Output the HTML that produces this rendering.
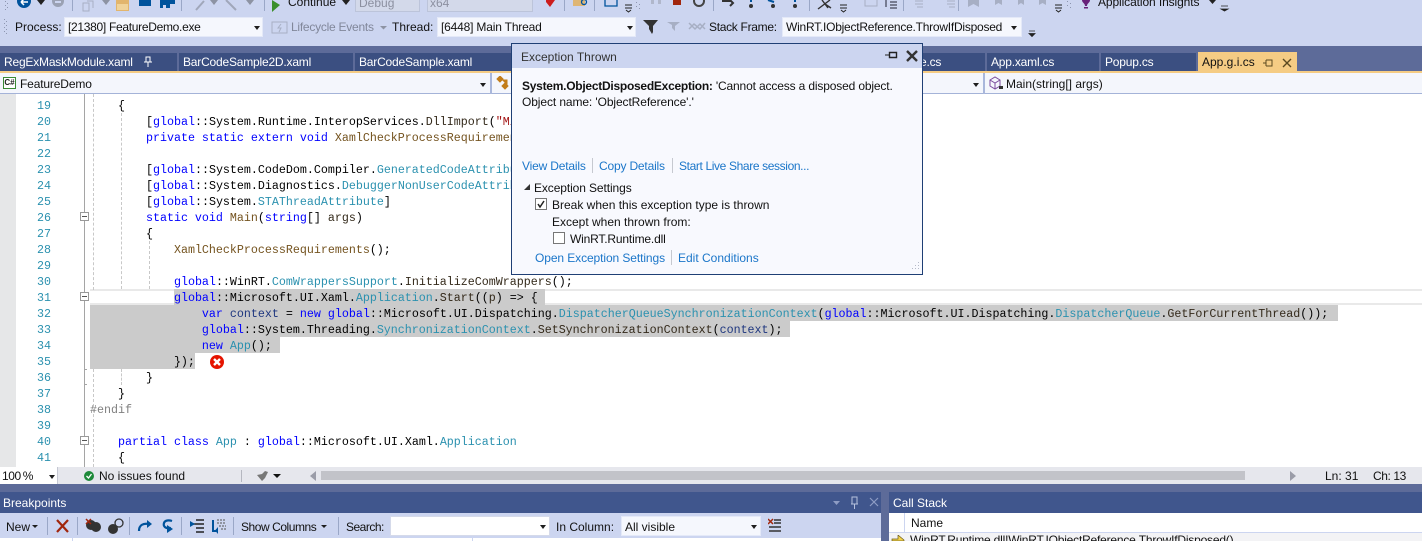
<!DOCTYPE html>
<html><head><meta charset="utf-8">
<style>
html,body{margin:0;padding:0;width:1422px;height:541px;overflow:hidden;background:#fff}
body{position:relative;font-family:"Liberation Sans",sans-serif;font-size:12px;color:#111}
.a{position:absolute}
.u{position:absolute;white-space:nowrap;line-height:16px;height:16px}
.c{position:absolute;left:90px;margin-top:1px;white-space:pre;font-family:"Liberation Mono",monospace;font-size:11.67px;line-height:16px;height:16px;color:#000}
.n{position:absolute;left:20px;width:31px;margin-top:1px;text-align:right;font-family:"Liberation Mono",monospace;font-size:11.67px;line-height:16px;color:#2b91af}
.k{color:#0000ff}.t{color:#2b91af}.m{color:#74531f}.d{color:#33291a}.v{color:#1f377f}.s{color:#a31515}.g{color:#808080}
.tab{position:absolute;top:53px;height:18px;background:#3b4f81;color:#fff;line-height:18px;padding-left:4px;box-sizing:border-box;white-space:nowrap;letter-spacing:-.2px}
.sep{position:absolute;width:1px;background:#9aa7c7}
.l{color:#1b76c9}
.cb{position:absolute;background:#f5f7fd;border:1px solid #e4e9f8;box-sizing:border-box;height:20px}
.ar{position:absolute;width:0;height:0;border-left:3.5px solid transparent;border-right:3.5px solid transparent;border-top:4px solid #1e1e1e}
.fold{position:absolute;left:80px;width:7px;height:7px;border:1px solid #999;background:#fff}
.fold:after{content:"";position:absolute;left:1px;top:3px;width:5px;height:1px;background:#555}
.dash{position:absolute;width:0;border-left:1px dashed #c8c8c8}
</style></head><body>

<!-- Top command area -->
<div class="a" style="left:0;top:0;width:1422px;height:46px;background:#ccd5f0"></div>
<svg class="a" style="left:0;top:0" width="1422" height="46">
 <g fill="#8d96b0"><rect x="5" y="1" width="1" height="1"/><rect x="7" y="3" width="1" height="1"/><rect x="5" y="5" width="1" height="1"/><rect x="7" y="7" width="1" height="1"/><rect x="5" y="9" width="1" height="1"/>
 <rect x="4" y="19" width="1" height="1"/><rect x="6" y="21" width="1" height="1"/><rect x="4" y="23" width="1" height="1"/><rect x="6" y="25" width="1" height="1"/><rect x="4" y="27" width="1" height="1"/><rect x="6" y="29" width="1" height="1"/><rect x="4" y="31" width="1" height="1"/><rect x="6" y="33" width="1" height="1"/>
 <rect x="636" y="2" width="1" height="1"/><rect x="639" y="4" width="1" height="1"/><rect x="636" y="6" width="1" height="1"/><rect x="639" y="8" width="1" height="1"/>
 <rect x="1067" y="1" width="1" height="1"/><rect x="1070" y="3" width="1" height="1"/><rect x="1067" y="5" width="1" height="1"/><rect x="1070" y="7" width="1" height="1"/></g>
 <circle cx="24" cy="1" r="7" fill="#00539c"/><path d="M21 2l3-3M21 2l3 3M21 2h7" stroke="#fff" stroke-width="1.500" fill="none"/>
 <path d="M37 0h8l-4 5z" fill="#222"/>
 <circle cx="58" cy="1" r="6" fill="#9aa1b3"/><path d="M55 2h6" stroke="#ccd5f0" stroke-width="2"/>
 <rect x="72" y="0" width="1" height="11" fill="#9aa7c7"/>
 <path d="M83 3h6v8h-6zM87 1h6v7" stroke="#a7afc4" fill="none"/><path d="M102 0h8l-4 5z" fill="#8d93a3"/>
 <path d="M116 0h13v11h-13z" fill="#e2b56d"/><path d="M117 4h11v6h-11z" fill="#f0d39a"/>
 <rect x="139" y="0" width="12" height="6" fill="#00539c"/>
 <rect x="160" y="0" width="10" height="8" fill="#00539c"/><rect x="170" y="0" width="5" height="4" fill="#00539c"/><rect x="163" y="5" width="3" height="3" fill="#ccd5f0"/>
 <rect x="181" y="0" width="1" height="11" fill="#9aa7c7"/>
 <path d="M196 10l8-9" stroke="#a0a7ba" stroke-width="2"/><path d="M210 0h8l-4 5z" fill="#8d93a3"/>
 <path d="M236 10l-10-10" stroke="#a0a7ba" stroke-width="2"/><path d="M246 0h8l-4 5z" fill="#8d93a3"/>
 <rect x="264" y="0" width="1" height="11" fill="#9aa7c7"/>
 <path d="M272 0l8 5-8 7z" fill="#3a8f2b"/>
 <path d="M342 0h8l-4 5z" fill="#222"/>
 <path d="M408 0h6l-3 4z" fill="#9a9fb0"/><path d="M526 0h6l-3 3z" fill="#9a9fb0"/>
 <path d="M546 2l4 5 5-7h-9z" fill="#cc1d1d"/>
 <rect x="564" y="0" width="1" height="11" fill="#9aa7c7"/>
 <path d="M573 0h12v6h-12z" fill="#dfb675"/><circle cx="584" cy="2" r="2.500" fill="none" stroke="#00539c" stroke-width="1.300"/>
 <rect x="594" y="0" width="1" height="11" fill="#9aa7c7"/>
 <path d="M605 0v6h12v-6" fill="none" stroke="#00539c" stroke-width="1.300"/>
 <path d="M625 5h7M625 8h7M626 10l2.500 2 2.500-2" stroke="#222" fill="none"/>
 <rect x="651" y="0" width="3" height="4" fill="#b0b7cb"/><rect x="658" y="0" width="3" height="4" fill="#b0b7cb"/>
 <rect x="673" y="0" width="8" height="5" fill="#a1260d"/>
 <circle cx="699" cy="1" r="5" fill="none" stroke="#444" stroke-width="2"/>
 <rect x="713" y="0" width="1" height="11" fill="#9aa7c7"/>
 <path d="M722 1h9l2 2-3 3" stroke="#333" stroke-width="2" fill="none"/>
 <rect x="750" y="0" width="2" height="2" fill="#00539c"/><circle cx="751" cy="6" r="2" fill="#333"/>
 <path d="M768 0l6 2" stroke="#00539c" stroke-width="2"/><circle cx="773" cy="6" r="2" fill="#333"/>
 <rect x="794" y="0" width="2" height="2" fill="#00539c"/><circle cx="795" cy="6" r="2" fill="#333"/>
 <rect x="809" y="0" width="1" height="11" fill="#9aa7c7"/>
 <path d="M818 9l12-9M822 0l6 8M825 4l6 4" stroke="#333" stroke-width="1.400" fill="none"/>
 <path d="M840 5h7M840 8h7M841 10l2.500 2 2.500-2" stroke="#222" fill="none"/>
 <path d="M865 0v6h12v-6" stroke="#a7afc4" fill="none"/>
 <path d="M886 0v7M890 2h7M890 5h7M890 8h7" stroke="#223" fill="none"/>
 <rect x="903" y="0" width="1" height="11" fill="#9aa7c7"/>
 <path d="M915 1h8M915 4h8M917 7h6M947 1h8M947 4h8M949 7h6" stroke="#a7afc4" fill="none"/>
 <rect x="958" y="0" width="1" height="11" fill="#9aa7c7"/>
 <path d="M968 0h11v7l-5.500-3-5.500 3zM995 0h7v5l-3.500-2-3.500 2zM1018 0h6v5l-3-2-3 2zM1039 0h7v5l-3.500-2-3.500 2z" fill="#a7afc4"/>
 <path d="M1055 5h7M1055 8h7M1056 10l2.500 2 2.500-2" stroke="#222" fill="none"/>
 <path d="M1082 0c0 3 3 3 3 6h2c0-3 3-3 3-6z" fill="#68217a"/><rect x="1084" y="7" width="4" height="1.500" fill="#68217a"/>
 <path d="M1209 0h7l-3.500 4z" fill="#222"/>
 <path d="M1221 6h7M1221 9h7l-3.500 2z" stroke="#222" fill="#222" stroke-width=".8"/>
 <path d="M1029 31h6M1029 33.500h6l-3 3z" stroke="#222" fill="#222" stroke-width=".8"/>
 <path d="M643 20h15l-5 6v6l-1 2-3-5v-3z" fill="#333"/>
 <path d="M667 22h13l-5 4v5l-3-3v-3z" fill="#a7afc4"/>
 <path d="M689 23l6 6 5-5 5 5M689 29l5-5 6 5 5-6" stroke="#a7afc4" stroke-width="1.500" fill="none"/>
 <path d="M272 22h15v11h-15z" fill="none" stroke="#a7afc4"/><path d="M281 24l-3 4h3l-2 4" stroke="#a7afc4" fill="none"/>
 <path d="M380 26h7l-3.500 3.500z" fill="#8d93a3"/>
</svg>
<div class="u" style="left:288px;top:-6px">Continue</div>
<div class="a" style="left:355px;top:-8px;width:65px;height:20px;background:#d3d9ea;border:1px solid #bcc4da;box-sizing:border-box"></div>
<div class="u" style="left:359px;top:-5px;color:#8c90a0">Debug</div>
<div class="a" style="left:427px;top:-8px;width:106px;height:20px;background:#d3d9ea;border:1px solid #bcc4da;box-sizing:border-box"></div>
<div class="u" style="left:430px;top:-5px;color:#8c90a0">x64</div>
<div class="u" style="left:1098px;top:-6px;letter-spacing:-.1px">Application Insights</div>

<div class="u" style="left:15px;top:19px">Process:</div>
<div class="cb" style="left:64px;top:17px;width:199px"></div>
<div class="u" style="left:68px;top:19px;letter-spacing:-.3px">[21380] FeatureDemo.exe</div>
<div class="ar" style="left:254px;top:26px"></div>
<div class="u" style="left:291px;top:19px;color:#81879a;letter-spacing:-.25px">Lifecycle Events</div>
<div class="u" style="left:392px;top:19px">Thread:</div>
<div class="cb" style="left:437px;top:17px;width:199px"></div>
<div class="u" style="left:441px;top:19px;letter-spacing:-.18px">[6448] Main Thread</div>
<div class="ar" style="left:627px;top:26px"></div>
<div class="u" style="left:709px;top:19px;letter-spacing:-.3px">Stack Frame:</div>
<div class="cb" style="left:782px;top:17px;width:240px"></div>
<div class="u" style="left:786px;top:19px;letter-spacing:-.24px">WinRT.IObjectReference.ThrowIfDisposed</div>
<div class="ar" style="left:1011px;top:26px"></div>

<!-- Tabs -->
<div class="a" style="left:0;top:46px;width:1422px;height:25px;background:#5d6b99"></div>
<div class="tab" style="left:0;width:177px">RegExMaskModule.xaml</div>
<svg class="a" style="left:143px;top:56px" width="10" height="12"><path d="M3 1h4v5H3zM1 6h8M5 6v5" stroke="#fff" fill="none"/></svg>
<div class="tab" style="left:179px;width:174px">BarCodeSample2D.xaml</div>
<div class="tab" style="left:355px;width:160px">BarCodeSample.xaml</div>
<div class="tab" style="left:517px;width:468px;padding-left:403px">e.cs</div>
<div class="tab" style="left:987px;width:112px">App.xaml.cs</div>
<div class="tab" style="left:1101px;width:95px">Popup.cs</div>
<div class="tab" style="left:1198px;top:52px;height:19px;width:99px;background:#f5cc84;color:#111;line-height:21px;letter-spacing:0">App.g.i.cs</div>
<svg class="a" style="left:1263px;top:57px" width="30" height="12"><path d="M0 6h3M3 3v6M3 3h6v6H3" stroke="#5b4a20" fill="none"/><path d="M20 2l8 8M28 2l-8 8" stroke="#5b4a20" stroke-width="1.400"/></svg>
<div class="a" style="left:0;top:71px;width:1422px;height:2px;background:#f5cc84"></div>

<!-- Navigation bar -->
<div class="a" style="left:0;top:73px;width:1422px;height:21px;background:#f4f6fc;border-bottom:1px solid #a4b3d8;box-sizing:border-box"></div>
<div class="a" style="left:3px;top:77px;width:11px;height:10px;border:1px solid #388a34;background:#fff;font-size:8px;line-height:10px;text-align:center;font-weight:bold;color:#222">C#</div>
<div class="u" style="left:20px;top:76px;letter-spacing:-.15px">FeatureDemo</div>
<div class="ar" style="left:480px;top:83px"></div>
<div class="a" style="left:490px;top:73px;width:2px;height:21px;background:#a9b7db"></div>
<svg class="a" style="left:496px;top:76px" width="15" height="15"><path d="M1 3l3-3 3 3-3 3zM6 4h5v5M9 7l3 3-3 3-3-3z" fill="#c27d1a" stroke="#c27d1a"/></svg>
<div class="ar" style="left:973px;top:83px"></div>
<div class="a" style="left:983px;top:73px;width:2px;height:21px;background:#a9b7db"></div>
<svg class="a" style="left:989px;top:76px" width="15" height="15"><path d="M1 4l5-3 5 3v6l-5 3-5-3zM1 4l5 3 5-3M6 7v6" stroke="#7b4c9e" fill="none"/><rect x="10" y="10" width="4" height="3" fill="#333"/></svg>
<div class="u" style="left:1006px;top:76px">Main(string[] args)</div>

<!-- Editor -->
<div class="a" style="left:0;top:94px;width:16px;height:373px;background:#e6e7e8"></div>
<div class="a" style="left:84px;top:94px;width:1px;height:373px;background:#a5a5a5"></div>
<div class="a" style="left:90px;top:289px;width:1332px;height:16px;border-top:2px solid #e9e9e9;border-bottom:2px solid #e9e9e9;box-sizing:border-box"></div>
<div class="a" style="left:174px;top:289px;width:371px;height:16px;background:#cbcbcb"></div>
<div class="a" style="left:90px;top:305px;width:1248px;height:16px;background:#cbcbcb"></div>
<div class="a" style="left:90px;top:321px;width:700px;height:16px;background:#cbcbcb"></div>
<div class="a" style="left:90px;top:337px;width:190px;height:16px;background:#cbcbcb"></div>
<div class="a" style="left:90px;top:353px;width:105px;height:16px;background:#cbcbcb"></div>

<div class="dash" style="left:93px;top:94px;height:196px"></div><div class="dash" style="left:93px;top:369px;height:98px"></div>
<div class="dash" style="left:121px;top:113px;height:176px"></div><div class="dash" style="left:121px;top:369px;height:16px"></div>
<div class="dash" style="left:149px;top:241px;height:48px"></div>
<div class="a" style="left:84px;top:369px;width:3px;height:1px;background:#a5a5a5"></div>
<div class="a" style="left:84px;top:384px;width:3px;height:1px;background:#a5a5a5"></div>

<div class="fold" style="top:212px"></div>
<div class="fold" style="top:292px"></div>
<div class="fold" style="top:436px"></div>

<div class="n" style="top:97px">19</div><div class="n" style="top:113px">20</div><div class="n" style="top:129px">21</div><div class="n" style="top:145px">22</div><div class="n" style="top:161px">23</div><div class="n" style="top:177px">24</div><div class="n" style="top:193px">25</div><div class="n" style="top:209px">26</div><div class="n" style="top:225px">27</div><div class="n" style="top:241px">28</div><div class="n" style="top:257px">29</div><div class="n" style="top:273px">30</div><div class="n" style="top:289px">31</div><div class="n" style="top:305px">32</div><div class="n" style="top:321px">33</div><div class="n" style="top:337px">34</div><div class="n" style="top:353px">35</div><div class="n" style="top:369px">36</div><div class="n" style="top:385px">37</div><div class="n" style="top:401px">38</div><div class="n" style="top:417px">39</div><div class="n" style="top:433px">40</div><div class="n" style="top:449px">41</div>

<div class="c" style="top:97px">    {</div>
<div class="c" style="top:113px">        [<span class="k">global</span>::System.Runtime.InteropServices.<span class="d">DllImport</span>(<span class="s">"Microsoft.ui.xaml.dll"</span>)]</div>
<div class="c" style="top:129px">        <span class="k">private static extern void</span> <span class="m">XamlCheckProcessRequirements</span>();</div>
<div class="c" style="top:161px">        [<span class="k">global</span>::System.CodeDom.Compiler.<span class="t">GeneratedCodeAttribute</span>(<span class="s">"Microsoft.UI.Xaml"</span>)]</div>
<div class="c" style="top:177px">        [<span class="k">global</span>::System.Diagnostics.<span class="t">DebuggerNonUserCodeAttribute</span>()]</div>
<div class="c" style="top:193px">        [<span class="k">global</span>::System.<span class="t">STAThreadAttribute</span>]</div>
<div class="c" style="top:209px">        <span class="k">static void</span> <span class="m">Main</span>(<span class="k">string</span>[] <span class="d">args</span>)</div>
<div class="c" style="top:225px">        {</div>
<div class="c" style="top:241px">            <span class="m">XamlCheckProcessRequirements</span>();</div>
<div class="c" style="top:273px">            <span class="k">global</span>::WinRT.<span class="t">ComWrappersSupport</span>.<span class="d">InitializeComWrappers</span>();</div>
<div class="c" style="top:289px">            <span class="k">global</span>::Microsoft.UI.Xaml.<span class="t">Application</span>.<span class="d">Start</span>((<span class="d">p</span>) =&gt; {</div>
<div class="c" style="top:305px">                <span class="k">var</span> <span class="v">context</span> = <span class="k">new</span> <span class="k">global</span>::Microsoft.UI.Dispatching.<span class="t">DispatcherQueueSynchronizationContext</span>(<span class="k">global</span>::Microsoft.UI.Dispatching.<span class="t">DispatcherQueue</span>.<span class="d">GetForCurrentThread</span>());</div>
<div class="c" style="top:321px">                <span class="k">global</span>::System.Threading.<span class="t">SynchronizationContext</span>.<span class="d">SetSynchronizationContext</span>(<span class="v">context</span>);</div>
<div class="c" style="top:337px">                <span class="k">new</span> <span class="t">App</span>();</div>
<div class="c" style="top:353px">            });</div>
<div class="c" style="top:369px">        }</div>
<div class="c" style="top:385px">    }</div>
<div class="c g" style="top:401px">#endif</div>
<div class="c" style="top:433px">    <span class="k">partial class</span> <span class="t">App</span> : <span class="k">global</span>::Microsoft.UI.Xaml.<span class="t">Application</span></div>
<div class="c" style="top:449px">    {</div>

<svg class="a" style="left:209px;top:354px" width="16" height="16"><circle cx="8" cy="8" r="7" fill="#e51400"/><path d="M5 5l6 6M11 5l-6 6" stroke="#fff" stroke-width="2.400"/></svg>

<!-- Exception dialog -->
<div class="a" style="left:511px;top:43px;width:412px;height:232px;background:#f8f9fe;border:1px solid #1f3f75;box-sizing:border-box"></div>
<div class="a" style="left:512px;top:44px;width:410px;height:24px;background:#ccd5f0"></div>
<div class="u" style="left:521px;top:49px;color:#333">Exception Thrown</div>
<svg class="a" style="left:884px;top:49px" width="36" height="14"><path d="M1 6h4" stroke="#222"/><path d="M5.500 3.500h7v5h-7z" stroke="#222" stroke-width="1.400" fill="none"/><path d="M23 2l10 10M33 2L23 12" stroke="#333" stroke-width="2.400"/></svg>
<div class="u" style="left:522px;top:78px;letter-spacing:-.15px"><b style="letter-spacing:-.26px">System.ObjectDisposedException:</b> 'Cannot access a disposed object.</div>
<div class="u" style="left:522px;top:94px;letter-spacing:-.1px">Object name: 'ObjectReference'.'</div>
<div class="u l" style="left:522px;top:158px;letter-spacing:-.18px">View Details</div>
<div class="a" style="left:592px;top:158px;width:1px;height:15px;background:#c6c9d0"></div>
<div class="u l" style="left:599px;top:158px;letter-spacing:-.18px">Copy Details</div>
<div class="a" style="left:672px;top:158px;width:1px;height:15px;background:#c6c9d0"></div>
<div class="u l" style="left:679px;top:158px;letter-spacing:-.37px">Start Live Share session...</div>
<svg class="a" style="left:523px;top:183px" width="8" height="8"><path d="M7 1v6H1z" fill="#333"/></svg>
<div class="u" style="left:534px;top:180px;letter-spacing:-.1px">Exception Settings</div>
<div class="a" style="left:535px;top:198px;width:12px;height:12px;border:1px solid #777;background:#fff;box-sizing:border-box"></div>
<svg class="a" style="left:535px;top:198px" width="12" height="12"><path d="M3 6l2 3 4-6" stroke="#222" stroke-width="1.500" fill="none"/></svg>
<div class="u" style="left:552px;top:197px">Break when this exception type is thrown</div>
<div class="u" style="left:552px;top:214px">Except when thrown from:</div>
<div class="a" style="left:553px;top:232px;width:12px;height:12px;border:1px solid #777;background:#fff;box-sizing:border-box"></div>
<div class="u" style="left:570px;top:231px;letter-spacing:-.17px">WinRT.Runtime.dll</div>
<div class="u l" style="left:535px;top:250px;letter-spacing:-.09px">Open Exception Settings</div>
<div class="a" style="left:671px;top:250px;width:1px;height:15px;background:#c6c9d0"></div>
<div class="u l" style="left:678px;top:250px">Edit Conditions</div>
<svg class="a" style="left:909px;top:261px" width="12" height="12" fill="#b5bac8"><rect x="9" y="1" width="1" height="1"/><rect x="6" y="4" width="1" height="1"/><rect x="9" y="4" width="1" height="1"/><rect x="3" y="7" width="1" height="1"/><rect x="6" y="7" width="1" height="1"/><rect x="9" y="7" width="1" height="1"/></svg>

<!-- Status row -->
<div class="a" style="left:0;top:467px;width:1422px;height:17px;background:#e6e7ed"></div>
<div class="a" style="left:0;top:467px;width:58px;height:17px;background:#fff;border-right:1px solid #c5c8d3;box-sizing:border-box"></div>
<div class="u" style="left:2px;top:468px;letter-spacing:-.4px;word-spacing:-1px">100 %</div>
<div class="ar" style="left:49px;top:475px"></div>
<svg class="a" style="left:83px;top:470px" width="12" height="12"><circle cx="6" cy="6" r="5" fill="#1e8a3a"/><path d="M3.500 6l2 2 3-4" stroke="#fff" stroke-width="1.300" fill="none"/></svg>
<div class="u" style="left:99px;top:468px">No issues found</div>
<div class="a" style="left:241px;top:470px;width:1px;height:12px;background:#b5b7c0"></div>
<svg class="a" style="left:256px;top:470px" width="26" height="13"><path d="M1 5l5 6 3-3 3-6-3-1-3 3z" fill="#777"/><path d="M17 4h8l-4 4z" fill="#111"/></svg>
<svg class="a" style="left:309px;top:471px" width="8" height="10"><path d="M7 0v10L1 5z" fill="#9a9ca8"/></svg>
<div class="a" style="left:321px;top:471px;width:924px;height:9px;background:#c2c3c9"></div>
<svg class="a" style="left:1289px;top:471px" width="8" height="10"><path d="M1 0v10l6-5z" fill="#9a9ca8"/></svg>
<div class="u" style="left:1325px;top:468px">Ln: 31</div>
<div class="u" style="left:1373px;top:468px;letter-spacing:-.4px">Ch: 13</div>

<!-- Bottom panels -->
<div class="a" style="left:0;top:484px;width:1422px;height:57px;background:#5d6b99"></div>
<div class="a" style="left:0;top:492px;width:881px;height:21px;background:#40568d"></div>
<div class="u" style="left:3px;top:495px;color:#fff">Breakpoints</div>
<svg class="a" style="left:832px;top:496px" width="48" height="14"><path d="M1 5h7l-3.500 4z" fill="#8e9cc4"/><path d="M20 1h5v7h-5zM19 8h7M22.500 8v5" stroke="#b6c1dd" fill="none"/><path d="M38 2l8 8M46 2l-8 8" stroke="#8e9cc4" stroke-width="1.200"/></svg>
<div class="a" style="left:0;top:513px;width:881px;height:25px;background:#ccd5f0"></div>
<div class="a" style="left:0;top:538px;width:881px;height:3px;background:#fff"></div>
<div class="a" style="left:72px;top:538px;width:1px;height:3px;background:#ccd5f0"></div>
<div class="a" style="left:472px;top:538px;width:1px;height:3px;background:#ccd5f0"></div>
<div class="u" style="left:6px;top:519px">New</div>
<div class="ar" style="left:32px;top:525px;border-top-width:3px"></div>
<div class="sep" style="left:47px;top:517px;height:18px"></div>
<div class="sep" style="left:77px;top:517px;height:18px"></div>
<div class="sep" style="left:129px;top:517px;height:18px"></div>
<div class="sep" style="left:181px;top:517px;height:18px"></div>
<div class="sep" style="left:233px;top:517px;height:18px"></div>
<div class="sep" style="left:338px;top:517px;height:18px"></div>
<svg class="a" style="left:55px;top:517px" width="320" height="20">
 <path d="M2 3l11 12M13 3L2 15" stroke="#a1260d" stroke-width="2.200"/>
 <circle cx="36" cy="8" r="5" fill="#333"/><circle cx="41" cy="10" r="5" fill="#333"/><path d="M31 2l5 5M36 2l-5 5" stroke="#a1260d" stroke-width="1.500"/>
 <circle cx="58" cy="12" r="5" fill="#333"/><circle cx="64" cy="6" r="4" fill="none" stroke="#333" stroke-width="1.300"/>
 <path d="M84 14c0-6 4-8 10-7" stroke="#00539c" stroke-width="2.200" fill="none"/><path d="M92 3l5 4-5 4z" fill="#00539c"/>
 <path d="M116 11c-6 1-8-2-7-5s5-3 8-2" stroke="#00539c" stroke-width="2.200" fill="none"/><path d="M112 8l6 4-6 4z" fill="#00539c"/>
 <path d="M141 3h8M136 7h13M141 11h8M141 15h8" stroke="#222" stroke-width="1.400"/><path d="M135 4l5 3-5 3z" fill="#00539c"/>
 <path d="M158 3v11h5" stroke="#00539c" stroke-width="2" fill="none"/><path d="M163 10l-3 3.500 3 3.500z" fill="#00539c"/><path d="M162 3h9M162 6h9M164 9h7M166 12h5" stroke="#555" stroke-dasharray="2 1" fill="none"/>
</svg>
<div class="u" style="left:241px;top:519px;letter-spacing:-.45px">Show Columns</div>
<div class="ar" style="left:321px;top:525px;border-top-width:3px"></div>
<div class="u" style="left:346px;top:519px;letter-spacing:-.5px">Search:</div>
<div class="a" style="left:390px;top:516px;width:160px;height:20px;background:#fff;border:1px solid #d5daea;box-sizing:border-box"></div>
<div class="ar" style="left:540px;top:525px"></div>
<div class="u" style="left:556px;top:519px">In Column:</div>
<div class="cb" style="left:621px;top:516px;width:140px"></div>
<div class="u" style="left:625px;top:519px">All visible</div>
<div class="ar" style="left:751px;top:525px"></div>
<svg class="a" style="left:768px;top:518px" width="14" height="16"><path d="M0 1l5 5M5 1L0 6" stroke="#a1260d" stroke-width="1.500"/><path d="M6 2h7M6 5h7" stroke="#333" stroke-width="1.400"/><path d="M1 9h12M1 13h12" stroke="#333" stroke-width="1.600"/></svg>

<div class="a" style="left:889px;top:492px;width:533px;height:21px;background:#40568d"></div>
<div class="u" style="left:893px;top:495px;color:#fff">Call Stack</div>
<div class="a" style="left:889px;top:513px;width:533px;height:20px;background:#fff;border-bottom:1px solid #ccd5f0;box-sizing:border-box"></div>
<div class="a" style="left:904px;top:513px;width:1px;height:20px;background:#ccd5f0"></div>
<div class="u" style="left:911px;top:515px">Name</div>
<div class="a" style="left:889px;top:533px;width:533px;height:8px;background:#f3f3f5"></div>
<svg class="a" style="left:891px;top:535px" width="14" height="6"><path d="M1 4h6V0l6 5v1H1z" fill="#f3d34a" stroke="#6b5b1a" stroke-width=".7"/></svg>
<div class="u" style="left:910px;top:532px;letter-spacing:-.2px">WinRT.Runtime.dll!WinRT.IObjectReference.ThrowIfDisposed()</div>
</body></html>
